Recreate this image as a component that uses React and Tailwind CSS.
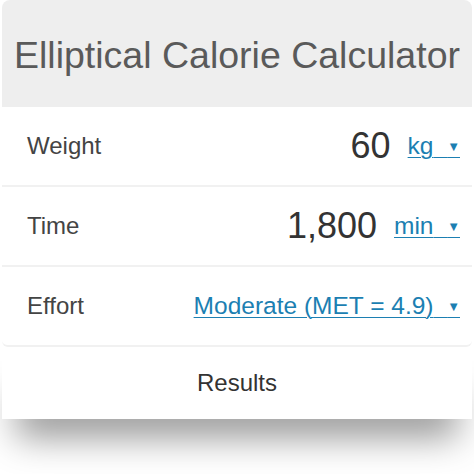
import React from "react";

const rows = [
  { label: "Weight", value: "60", unit: "kg" },
  { label: "Time", value: "1,800", unit: "min" },
];

function Unit({ children }) {
  return (
    <span className="text-[24.5px] text-[#1c7fb2] underline decoration-1 underline-offset-[3px] cursor-pointer whitespace-pre">
      {children}
      {"\u00a0\u00a0"}
      <span className="text-[13px] relative -top-[3px]">▼</span>
    </span>
  );
}

export default function App() {
  return (
    <div
      className="w-[474px] h-[474px] bg-white overflow-hidden px-[2px]"
      style={{ fontFamily: '"Liberation Sans", Arial, sans-serif' }}
    >
      <div className="rounded-t-[8px] overflow-hidden">
        <div className="h-[107px] pt-[3px] bg-[#eeeeee] flex items-center justify-center">
          <h1 className="text-[37.5px] text-[#5a5a5a] font-normal">
            Elliptical Calorie Calculator
          </h1>
        </div>
      </div>

      {rows.map((r) => (
        <div
          key={r.label}
          className="h-[80px] flex items-center justify-between pl-[25px] pr-[12px] border-b-2 border-[#f1f1f1]"
        >
          <span className="text-[24px] text-[#444]">{r.label}</span>
          <div className="flex items-center gap-[17px]">
            <span className="text-[36px] text-[#333]">{r.value}</span>
            <Unit>{r.unit}</Unit>
          </div>
        </div>
      ))}

      <div className="h-[80px] flex items-center justify-between pl-[25px] pr-[12px] border-b-2 border-[#f1f1f1] rounded-b-[6px]">
        <span className="text-[24px] text-[#444]">Effort</span>
        <Unit>Moderate (MET = 4.9)</Unit>
      </div>

      <div className="h-[72px] flex items-center justify-center bg-white relative shadow-[0_32px_36px_-14px_rgba(0,0,0,0.42)]">
        <span className="text-[24px] text-[#333]">Results</span>
      </div>
    </div>
  );
}
